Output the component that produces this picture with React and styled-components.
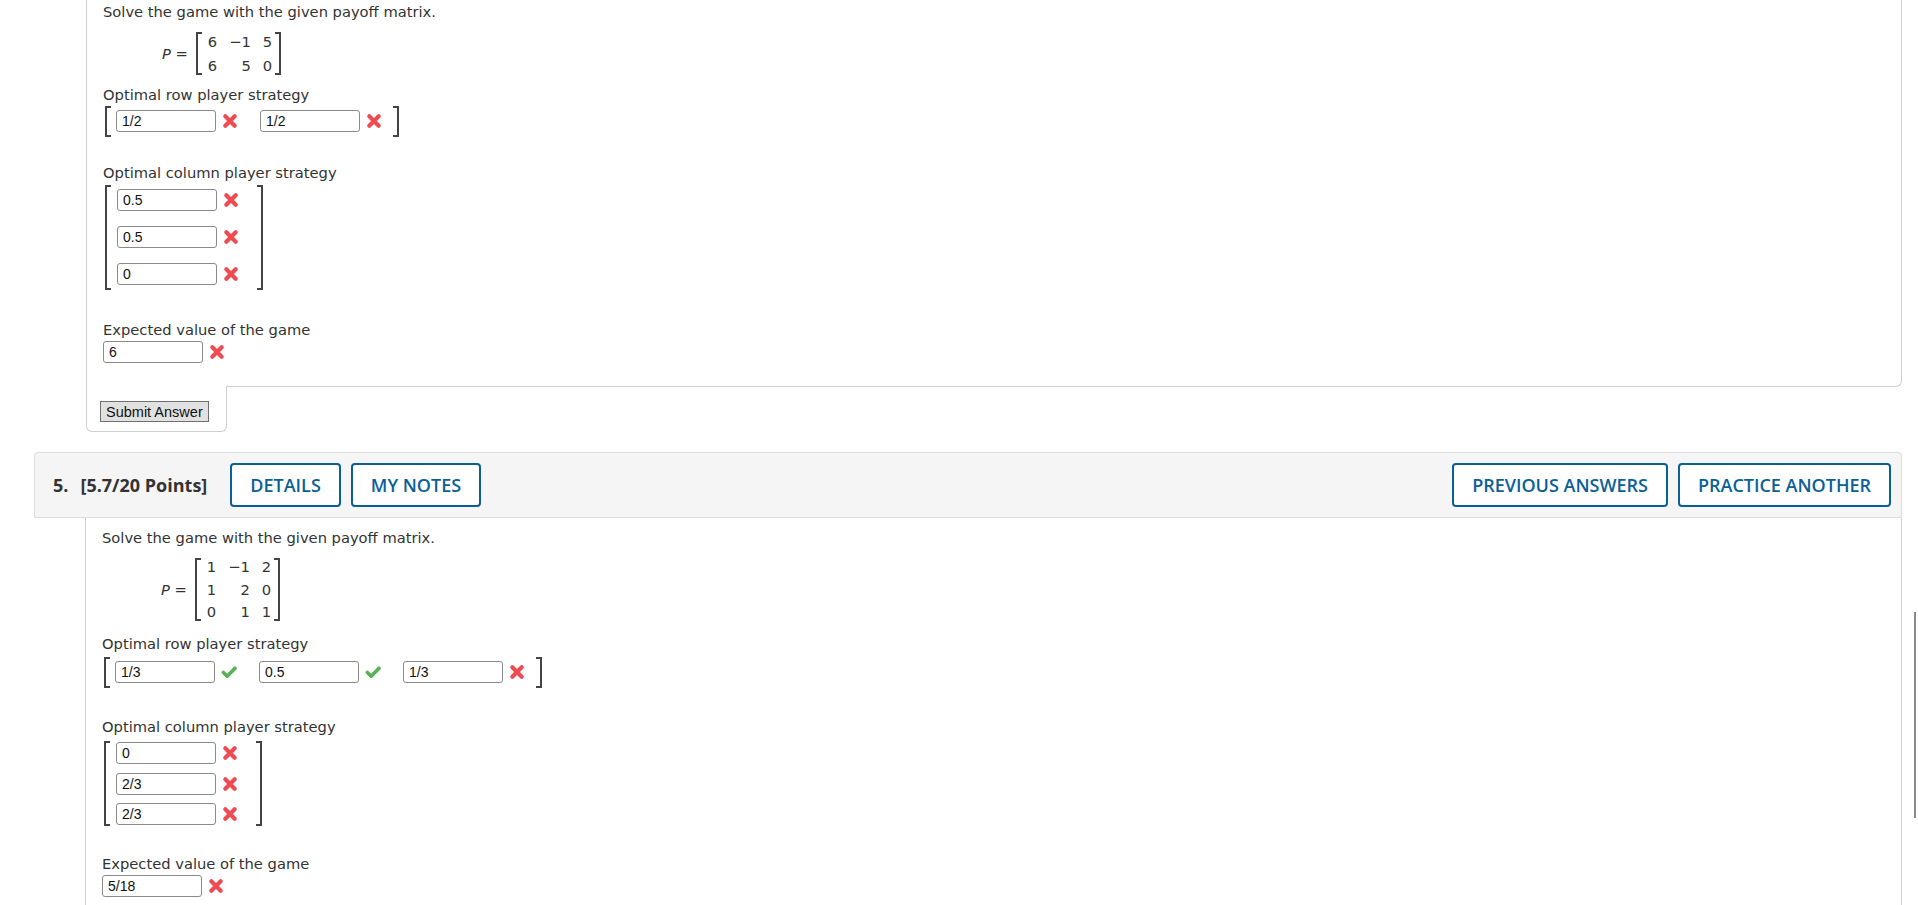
import styled, { createGlobalStyle } from "styled-components";

const GlobalStyle = createGlobalStyle`
  body {
    margin: 0;
    background: #fff;
    color: #333;
    font-family: "DejaVu Sans", Verdana, sans-serif;
  }
`;

const Page = styled.div`
  width: 1868px;
  padding-left: 34px;
`;

const QuestionBody = styled.div`
  margin-left: ${(p) => p.$inset}px;
  padding: ${(p) => p.$pt}px 16px ${(p) => p.$pb}px;
  border: 1px solid #cfcfcf;
  border-top: none;
  border-bottom: ${(p) => (p.$open ? "none" : "1px solid #cfcfcf")};
  border-radius: 0 0 6px 0;
`;

const SubmitTab = styled.div`
  position: relative;
  box-sizing: border-box;
  width: 141px;
  margin: -1px 0 0 52px;
  padding: 15px 0 9px 13px;
  background: #fff;
  border: 1px solid #cfcfcf;
  border-top: none;
  border-radius: 0 0 6px 6px;
`;

const SubmitButton = styled.button`
  display: block;
  height: 21px;
  padding: 0 5px;
  font-family: "Liberation Sans", Arial, sans-serif;
  font-size: 14.5px;
  color: #111;
  background: #e1e1e1;
  border: 1px solid #707070;
  border-radius: 0;
`;

const Header = styled.div`
  display: flex;
  align-items: center;
  gap: 10px;
  margin-top: 20px;
  padding: 10px 10px 10px 18px;
  background: #f5f5f5;
  border: 1px solid #dcdcdc;
  border-radius: 4px 4px 0 0;
`;

const Title = styled.div`
  display: flex;
  gap: 12px;
  margin-right: 13px;
  font-family: "Open Sans", sans-serif;
  font-weight: 700;
  font-size: 18px;
  color: #333;
`;

const Spacer = styled.div`
  flex: 1;
`;

const HeaderButton = styled.button`
  height: 44px;
  padding: 0 18px;
  font-family: "Open Sans", sans-serif;
  font-weight: 600;
  font-size: 18px;
  color: #0b5f97;
  background: #fff;
  border: 2px solid #0b5f97;
  border-radius: 4px;
`;

const Prompt = styled.p`
  margin: 0;
  font-size: 14.7px;
  line-height: 18px;
`;

const MatrixLine = styled.div`
  display: flex;
  align-items: center;
  gap: 8px;
  margin: 11px 0 0 59px;
  font-size: 14.7px;
`;

const MathVar = styled.span`
  font-style: italic;
`;

const Bracket = styled.span`
  flex: none;
  width: 4px;
  border: 2px solid #444;
  border-${(p) => (p.$side === "left" ? "right" : "left")}: none;
`;

const MatrixBox = styled.div`
  display: flex;
  align-items: stretch;
`;

const MatrixGrid = styled.div`
  display: grid;
  grid-template-columns: repeat(${(p) => p.$cols}, auto);
  grid-auto-rows: ${(p) => p.$rowHeight}px;
  row-gap: ${(p) => p.$rowGap}px;
  column-gap: 12px;
  justify-items: end;
  align-items: center;
  padding: 0 3px 0 6px;
  line-height: ${(p) => p.$rowHeight}px;
  color: #333;
`;

const Label = styled.div`
  margin-top: ${(p) => p.$mt}px;
  font-size: 14.7px;
  line-height: 18px;
`;

const Vector = styled.div`
  display: flex;
  width: fit-content;
  align-items: stretch;
  margin: ${(p) => p.$mt}px 0 0 2px;
`;

const VectorItems = styled.div`
  display: flex;
  flex-direction: ${(p) => (p.$column ? "column" : "row")};
  gap: ${(p) => p.$gap}px;
  padding: ${(p) => p.$pad};
`;

const Cell = styled.div`
  display: flex;
  align-items: center;
  gap: 6px;
`;

const ValueRow = styled(Cell)`
  margin-top: ${(p) => p.$mt}px;
`;

const AnswerInput = styled.input`
  box-sizing: border-box;
  width: 100px;
  height: 22px;
  padding: 0 5px;
  font-family: "Liberation Sans", Arial, sans-serif;
  font-size: 14px;
  color: #111;
  background: #fff;
  border: 1px solid #8a8a8a;
  border-radius: 3px;
  outline: none;
`;

const MarkIcon = styled.svg`
  flex: none;
  width: 16px;
  height: 16px;
`;

const ScrollHint = styled.div`
  position: fixed;
  top: 612px;
  right: 2px;
  width: 2px;
  height: 206px;
  background: #8a8a8a;
`;

function Mark({ ok }) {
  if (ok) {
    return (
      <MarkIcon viewBox="0 0 16 16">
        <path
          d="M2.4 8.4 L6.2 12.2 L14 4.2"
          fill="none"
          stroke="#57b157"
          strokeWidth="3.6"
          strokeLinecap="round"
          strokeLinejoin="round"
        />
      </MarkIcon>
    );
  }
  return (
    <MarkIcon viewBox="0 0 16 16">
      <path
        d="M3.3 3.3 L12.7 12.7 M12.7 3.3 L3.3 12.7"
        fill="none"
        stroke="#ee4c52"
        strokeWidth="4.2"
        strokeLinecap="round"
      />
    </MarkIcon>
  );
}

function Answer({ value, ok }) {
  return (
    <Cell>
      <AnswerInput readOnly value={value} />
      <Mark ok={ok} />
    </Cell>
  );
}

function Matrix({ rows, rowGap, rowHeight }) {
  return (
    <MatrixLine>
      <span>
        <MathVar>P</MathVar> =
      </span>
      <MatrixBox>
        <Bracket $side="left" />
        <MatrixGrid
          $cols={rows[0].length}
          $rowGap={rowGap}
          $rowHeight={rowHeight}
        >
          {rows.flat().map((v, i) => (
            <span key={i}>{v}</span>
          ))}
        </MatrixGrid>
        <Bracket $side="right" />
      </MatrixBox>
    </MatrixLine>
  );
}

function RowVector({ items, mt }) {
  return (
    <Vector $mt={mt}>
      <Bracket $side="left" />
      <VectorItems $gap={22} $pad="4px 11px 5px 5px">
        {items.map((it, i) => (
          <Answer key={i} {...it} />
        ))}
      </VectorItems>
      <Bracket $side="right" />
    </Vector>
  );
}

function ColVector({ items, mt, gap, pad }) {
  return (
    <Vector $mt={mt}>
      <Bracket $side="left" />
      <VectorItems $column $gap={gap} $pad={pad}>
        {items.map((it, i) => (
          <Answer key={i} {...it} />
        ))}
      </VectorItems>
      <Bracket $side="right" />
    </Vector>
  );
}

export default function App() {
  return (
    <Page>
      <GlobalStyle />

      <QuestionBody $inset={52} $pt={3} $pb={23}>
        <Prompt>Solve the game with the given payoff matrix.</Prompt>
        <Matrix
          rowGap={5}
          rowHeight={19}
          rows={[
            ["6", "\u22121", "5"],
            ["6", "5", "0"],
          ]}
        />
        <Label $mt={11}>Optimal row player strategy</Label>
        <RowVector mt={2} items={[{ value: "1/2" }, { value: "1/2" }]} />
        <Label $mt={27}>Optimal column player strategy</Label>
        <ColVector
          mt={3}
          gap={15}
          pad="4px 18px 5px 6px"
          items={[{ value: "0.5" }, { value: "0.5" }, { value: "0" }]}
        />
        <Label $mt={31}>Expected value of the game</Label>
        <ValueRow $mt={2}>
          <AnswerInput readOnly value="6" />
          <Mark />
        </ValueRow>
      </QuestionBody>
      <SubmitTab>
        <SubmitButton>Submit Answer</SubmitButton>
      </SubmitTab>

      <Header>
        <Title>
          <span>5.</span>
          <span>[5.7/20 Points]</span>
        </Title>
        <HeaderButton>DETAILS</HeaderButton>
        <HeaderButton>MY NOTES</HeaderButton>
        <Spacer />
        <HeaderButton>PREVIOUS ANSWERS</HeaderButton>
        <HeaderButton>PRACTICE ANOTHER</HeaderButton>
      </Header>

      <QuestionBody $inset={51} $pt={11} $pb={20} $open>
        <Prompt>Solve the game with the given payoff matrix.</Prompt>
        <Matrix
          rowGap={4.5}
          rowHeight={18}
          rows={[
            ["1", "\u22121", "2"],
            ["1", "2", "0"],
            ["0", "1", "1"],
          ]}
        />
        <Label $mt={14}>Optimal row player strategy</Label>
        <RowVector
          mt={4}
          items={[
            { value: "1/3", ok: true },
            { value: "0.5", ok: true },
            { value: "1/3" },
          ]}
        />
        <Label $mt={30}>Optimal column player strategy</Label>
        <ColVector
          mt={5}
          gap={8.5}
          pad="1px 18px 1px 6px"
          items={[{ value: "0" }, { value: "2/3" }, { value: "2/3" }]}
        />
        <Label $mt={29}>Expected value of the game</Label>
        <ValueRow $mt={2}>
          <AnswerInput readOnly value="5/18" />
          <Mark />
        </ValueRow>
      </QuestionBody>

      <ScrollHint />
    </Page>
  );
}
